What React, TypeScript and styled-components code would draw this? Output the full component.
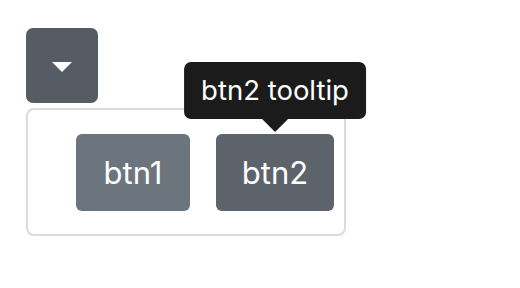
import styled, { createGlobalStyle } from "styled-components";

const GlobalStyle = createGlobalStyle`
  body {
    margin: 0;
    background: #fff;
    font-family: "Inter", "Liberation Sans", sans-serif;
  }
`;

const Page = styled.div`
  padding: 28px 26px;
  display: flex;
  flex-direction: column;
  align-items: flex-start;
  gap: 5px;
`;

const Toggle = styled.button`
  width: 72px;
  height: 75px;
  border: none;
  border-radius: 7px;
  background: #555c63;
  display: flex;
  align-items: center;
  justify-content: center;
  padding: 0;
  cursor: pointer;
`;

const Caret = styled.span`
  width: 0;
  height: 0;
  border-left: 10px solid transparent;
  border-right: 10px solid transparent;
  border-top: 10px solid #fff;
  margin-top: 2px;
`;

const Card = styled.div`
  box-sizing: border-box;
  width: 320px;
  height: 128px;
  border: 2px solid #dcdcdc;
  border-radius: 8px;
  padding: 24px 10px 24px 48px;
  display: flex;
  align-items: center;
  gap: 26px;
`;

const Anchor = styled.div`
  position: relative;
  display: flex;
`;

const Button = styled.button<{ $hover?: boolean }>`
  height: 77px;
  width: ${(p) => (p.$hover ? "118px" : "114px")};
  border: none;
  border-radius: 6px;
  background: ${(p) => (p.$hover ? "#5c636a" : "#6c757d")};
  color: #fff;
  font-family: "Inter", "Liberation Sans", sans-serif;
  font-size: 31px;
  padding: 0;
  cursor: pointer;
`;

const Tooltip = styled.div`
  position: absolute;
  left: 50%;
  bottom: calc(100% + 15px);
  transform: translateX(-50%);
  background: #1b1b1b;
  color: #fff;
  font-size: 27.5px;
  white-space: nowrap;
  padding: 0 17px;
  height: 57px;
  display: flex;
  align-items: center;
  border-radius: 7px;

  &::after {
    content: "";
    position: absolute;
    left: 50%;
    top: 100%;
    transform: translateX(-50%);
    border-left: 13px solid transparent;
    border-right: 13px solid transparent;
    border-top: 13px solid #1b1b1b;
  }
`;

export default function App() {
  return (
    <>
      <GlobalStyle />
      <Page>
        <Toggle aria-label="toggle">
          <Caret />
        </Toggle>
        <Card>
          <Button>btn1</Button>
          <Anchor>
            <Button $hover>btn2</Button>
            <Tooltip>btn2 tooltip</Tooltip>
          </Anchor>
        </Card>
      </Page>
    </>
  );
}
